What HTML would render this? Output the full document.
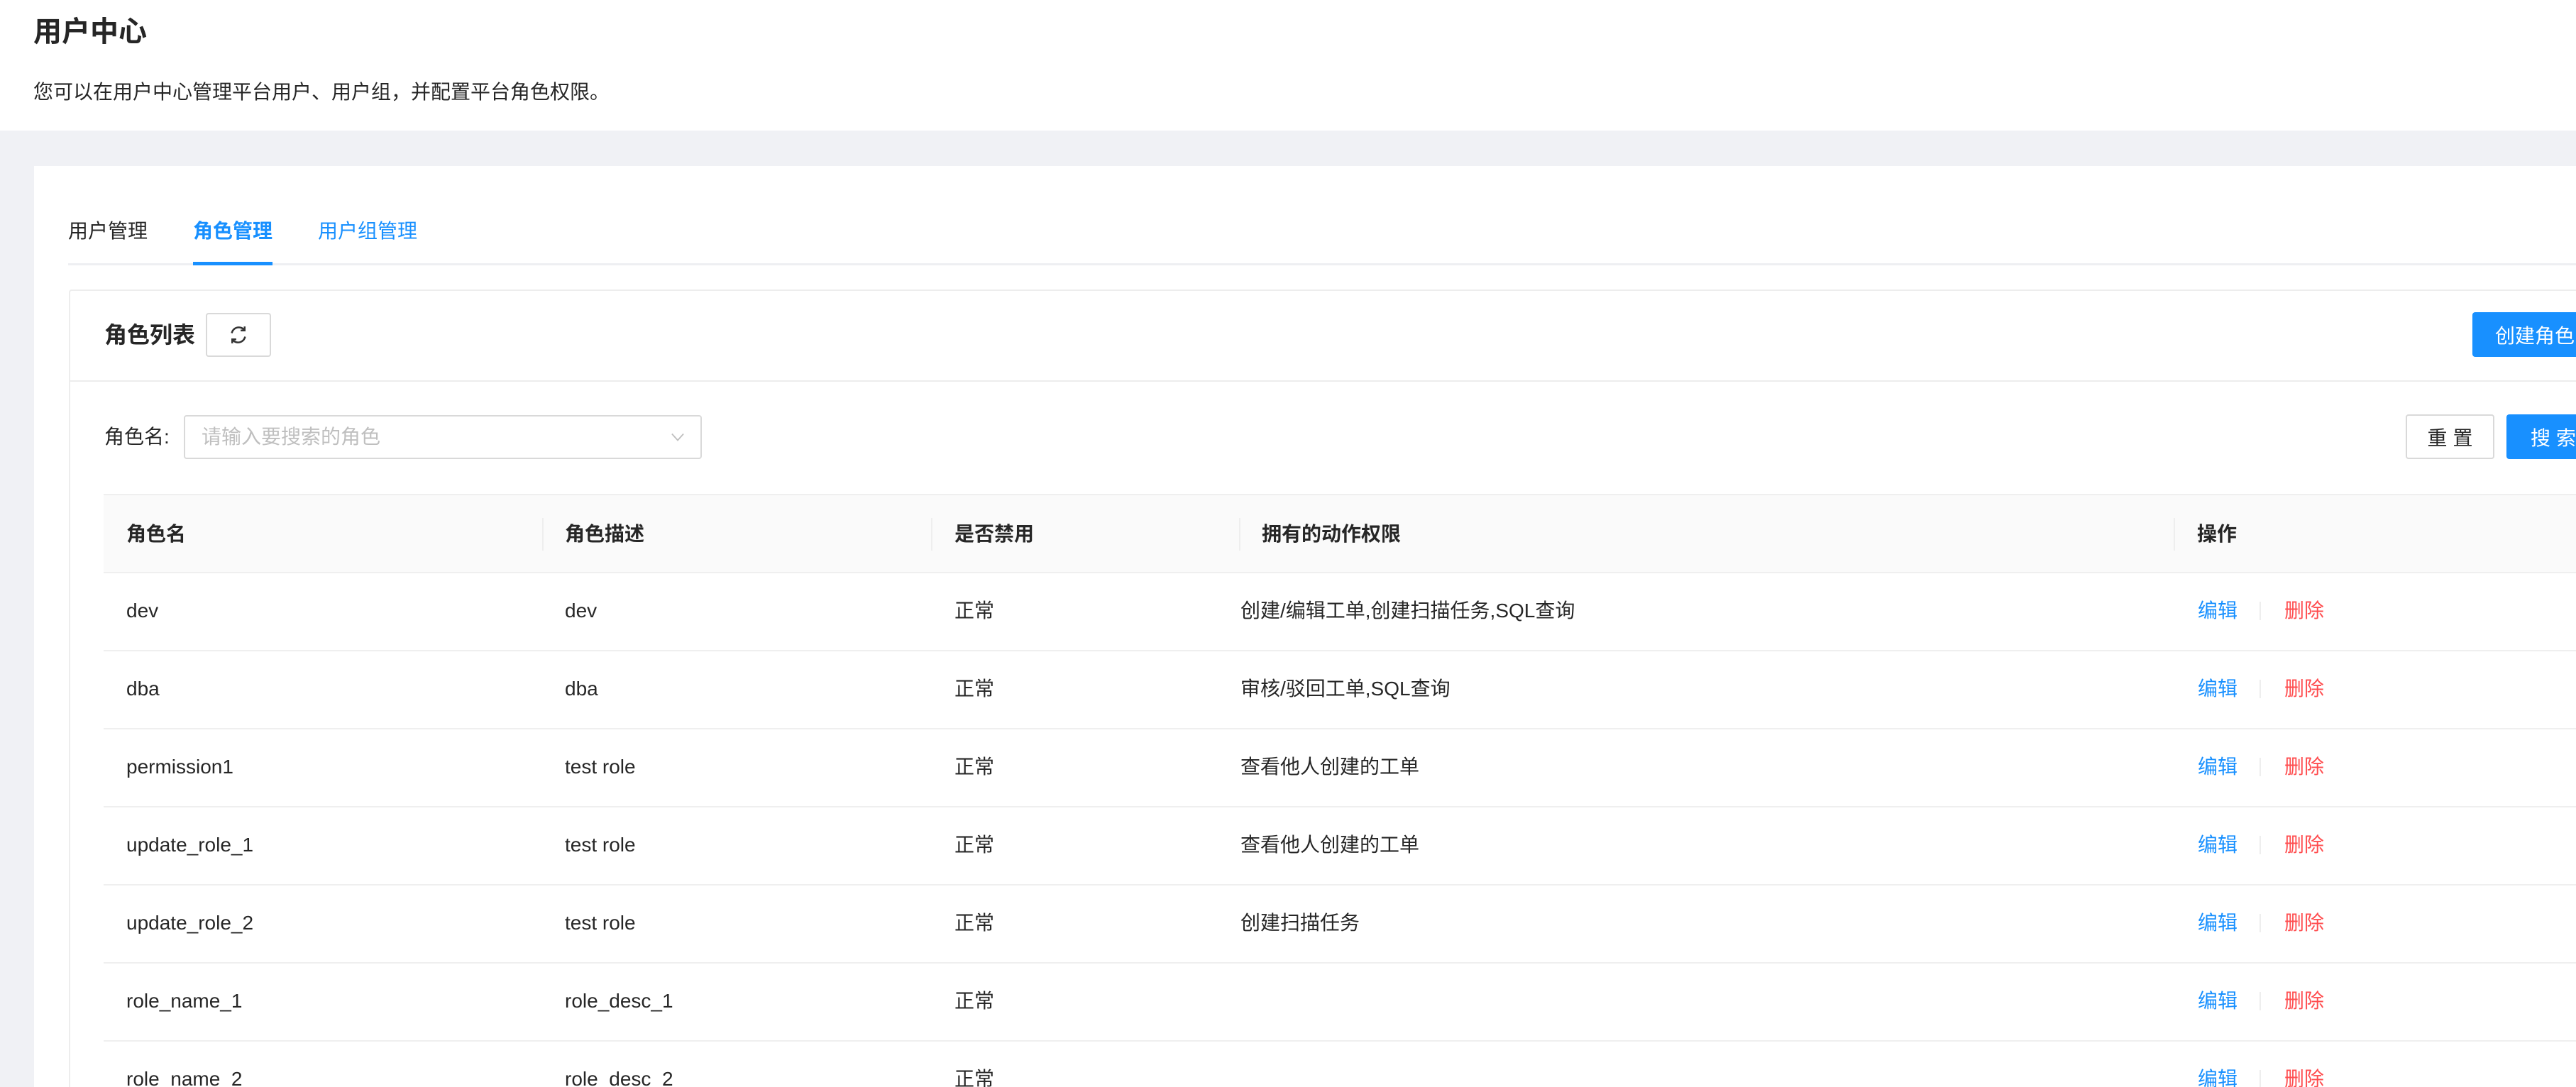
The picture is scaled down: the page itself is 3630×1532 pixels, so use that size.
<!DOCTYPE html>
<html style="width:3630px;height:1532px;overflow:hidden"><head><meta charset="utf-8"><style>
*{margin:0;padding:0;box-sizing:border-box}
body{width:3630px;height:1532px;overflow:hidden;background:#f0f1f5;font-family:"Liberation Sans","Noto Sans CJK SC",sans-serif;color:rgba(0,0,0,.85);position:relative}
.a{position:absolute;white-space:nowrap}
.hdr{position:absolute;left:0;top:0;width:3630px;height:184px;background:#fff}
.card{position:absolute;left:48px;top:234px;width:3582px;height:1298px;background:#fff}
.inner{position:absolute;left:97px;top:408px;width:3600px;height:1200px;border:2px solid #ededed;border-radius:4px}
.t{font-size:28px;line-height:32px}
.btn{position:absolute;border-radius:4px;font-size:28px;display:flex;align-items:center;justify-content:center}
.ln{position:absolute;left:146px;width:3500px;height:2px;background:#efefef}
</style></head><body>
<div class="hdr"></div>
<div class="a" style="left:47px;top:20px;font-size:40px;font-weight:bold;line-height:50px">用户中心</div>
<div class="a t" style="left:47px;top:114px">您可以在用户中心管理平台用户、用户组，并配置平台角色权限。</div>
<div class="card"></div>
<div class="a t" style="left:96px;top:310px">用户管理</div>
<div class="a t" style="left:272px;top:310px;color:#1890ff;font-weight:bold">角色管理</div>
<div class="a t" style="left:448px;top:310px;color:#1890ff">用户组管理</div>
<div class="a" style="left:96px;top:371px;width:3600px;height:3px;background:#eeeff2"></div>
<div class="a" style="left:272px;top:369px;width:112px;height:5px;background:#1890ff"></div>
<div class="inner"></div>
<div class="a" style="left:147px;top:453px;font-size:32px;font-weight:bold;line-height:38px">角色列表</div>
<div class="btn" style="left:290px;top:441px;width:92px;height:62px;border:2px solid #d9d9d9;background:#fff">
<svg width="30" height="30" viewBox="0 0 24 24" fill="none" stroke="#333" stroke-width="2"><path d="M4.5 10a8 8 0 0 1 14.5-3"/><path d="M19.5 14a8 8 0 0 1-14.5 3"/><path d="M19 2.5v4.5h-4.5" /><path d="M5 21.5v-4.5h4.5"/></svg></div>
<div class="btn" style="left:3484px;top:440px;width:200px;height:63px;background:#1890ff;color:#fff;justify-content:flex-start;padding-left:32px">创建角色</div>
<div class="a" style="left:97px;top:536px;width:3600px;height:2px;background:#ededed"></div>
<div class="a t" style="left:147px;top:600px">角色名:</div>
<div class="a" style="left:259px;top:585px;width:730px;height:62px;border:2px solid #d9d9d9;border-radius:4px;background:#fff"></div>
<div class="a t" style="left:284px;top:600px;color:#bfbfbf">请输入要搜索的角色</div>
<svg class="a" style="left:944px;top:607px" width="22" height="18" viewBox="0 0 24 20"><path d="M3 5l9 10 9-10" fill="none" stroke="#bfbfbf" stroke-width="2"/></svg>
<div class="btn" style="left:3390px;top:584px;width:125px;height:63px;border:2px solid #d9d9d9;background:#fff;letter-spacing:8px;padding-left:8px">重置</div>
<div class="btn" style="left:3532px;top:584px;width:200px;height:63px;background:#1890ff;color:#fff;justify-content:flex-start;padding-left:34px;letter-spacing:8px">搜索</div>
<div class="a" style="left:146px;top:696px;width:3500px;height:112px;background:#fafafa;border-top:2px solid #efefef;border-bottom:2px solid #efefef"></div>
<div class="a" style="left:764px;top:730px;width:2px;height:46px;background:#eee"></div>
<div class="a" style="left:1312px;top:730px;width:2px;height:46px;background:#eee"></div>
<div class="a" style="left:1746px;top:730px;width:2px;height:46px;background:#eee"></div>
<div class="a" style="left:3063px;top:730px;width:2px;height:46px;background:#eee"></div>
<div class="a t" style="left:178px;top:737px;font-weight:bold">角色名</div>
<div class="a t" style="left:796px;top:737px;font-weight:bold">角色描述</div>
<div class="a t" style="left:1345px;top:737px;font-weight:bold">是否禁用</div>
<div class="a t" style="left:1778px;top:737px;font-weight:bold">拥有的动作权限</div>
<div class="a t" style="left:3096px;top:737px;font-weight:bold">操作</div>
<div class="ln" style="top:916px"></div><div class="ln" style="top:1026px"></div><div class="ln" style="top:1136px"></div><div class="ln" style="top:1246px"></div><div class="ln" style="top:1356px"></div><div class="ln" style="top:1466px"></div>
<div class="a t" style="left:178px;top:845px">dev</div><div class="a t" style="left:796px;top:845px">dev</div><div class="a t" style="left:1345px;top:845px">正常</div><div class="a t" style="left:1748px;top:845px">创建/编辑工单,创建扫描任务,SQL查询</div>
<div class="a t" style="left:178px;top:955px">dba</div><div class="a t" style="left:796px;top:955px">dba</div><div class="a t" style="left:1345px;top:955px">正常</div><div class="a t" style="left:1748px;top:955px">审核/驳回工单,SQL查询</div>
<div class="a t" style="left:178px;top:1065px">permission1</div><div class="a t" style="left:796px;top:1065px">test role</div><div class="a t" style="left:1345px;top:1065px">正常</div><div class="a t" style="left:1748px;top:1065px">查看他人创建的工单</div>
<div class="a t" style="left:178px;top:1175px">update_role_1</div><div class="a t" style="left:796px;top:1175px">test role</div><div class="a t" style="left:1345px;top:1175px">正常</div><div class="a t" style="left:1748px;top:1175px">查看他人创建的工单</div>
<div class="a t" style="left:178px;top:1285px">update_role_2</div><div class="a t" style="left:796px;top:1285px">test role</div><div class="a t" style="left:1345px;top:1285px">正常</div><div class="a t" style="left:1748px;top:1285px">创建扫描任务</div>
<div class="a t" style="left:178px;top:1395px">role_name_1</div><div class="a t" style="left:796px;top:1395px">role_desc_1</div><div class="a t" style="left:1345px;top:1395px">正常</div>
<div class="a t" style="left:178px;top:1505px">role_name_2</div><div class="a t" style="left:796px;top:1505px">role_desc_2</div><div class="a t" style="left:1345px;top:1505px">正常</div>
<div class="a t" style="left:3097px;top:845px;color:#1890ff">编辑</div><div class="a" style="left:3184px;top:848px;width:2px;height:26px;background:#eee"></div><div class="a t" style="left:3219px;top:845px;color:#ff4d4f">删除</div>
<div class="a t" style="left:3097px;top:955px;color:#1890ff">编辑</div><div class="a" style="left:3184px;top:958px;width:2px;height:26px;background:#eee"></div><div class="a t" style="left:3219px;top:955px;color:#ff4d4f">删除</div>
<div class="a t" style="left:3097px;top:1065px;color:#1890ff">编辑</div><div class="a" style="left:3184px;top:1068px;width:2px;height:26px;background:#eee"></div><div class="a t" style="left:3219px;top:1065px;color:#ff4d4f">删除</div>
<div class="a t" style="left:3097px;top:1175px;color:#1890ff">编辑</div><div class="a" style="left:3184px;top:1178px;width:2px;height:26px;background:#eee"></div><div class="a t" style="left:3219px;top:1175px;color:#ff4d4f">删除</div>
<div class="a t" style="left:3097px;top:1285px;color:#1890ff">编辑</div><div class="a" style="left:3184px;top:1288px;width:2px;height:26px;background:#eee"></div><div class="a t" style="left:3219px;top:1285px;color:#ff4d4f">删除</div>
<div class="a t" style="left:3097px;top:1395px;color:#1890ff">编辑</div><div class="a" style="left:3184px;top:1398px;width:2px;height:26px;background:#eee"></div><div class="a t" style="left:3219px;top:1395px;color:#ff4d4f">删除</div>
<div class="a t" style="left:3097px;top:1505px;color:#1890ff">编辑</div><div class="a" style="left:3184px;top:1508px;width:2px;height:26px;background:#eee"></div><div class="a t" style="left:3219px;top:1505px;color:#ff4d4f">删除</div>
</body></html>
